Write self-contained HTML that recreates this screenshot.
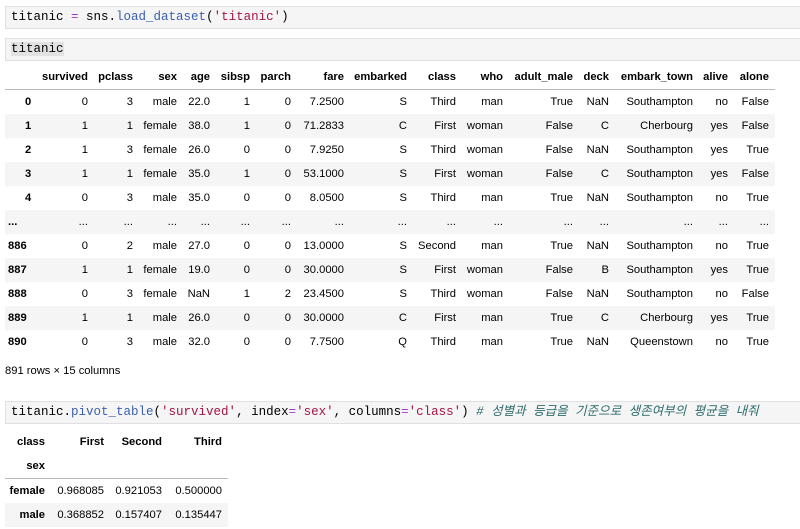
<!DOCTYPE html><html><head><meta charset="utf-8"><style>
body{margin:0;width:800px;height:529px;background:#fff;position:relative;overflow:hidden;font-family:"Liberation Sans",Arial,sans-serif;font-size:11.2px;color:#000}
.code{position:absolute;left:5px;width:800px;height:23px;background:#f5f5f5;border:1px solid #e0e0e0;box-sizing:border-box;font-family:"Liberation Mono","Noto Sans CJK KR",monospace;font-size:12.5px;line-height:21px;padding-left:5px;white-space:pre}
.k{color:#3a5fb0}.s{color:#a31545}.o{color:#a839c4}.c{color:#2d6b6b;font-style:italic}
table{position:absolute;border-collapse:collapse;table-layout:fixed}
td,th{height:24px;padding:0;text-align:right;white-space:nowrap}
th{font-weight:bold}
tr.g td,tr.g th{background:#f5f5f5}
thead tr th{border-bottom:1px solid #bbb}
</style></head><body>
<div class="code" style="top:6px">titanic <span class="o">=</span> sns.<span class="k">load_dataset</span>(<span class="s">'titanic'</span>)</div>
<div class="code" style="top:38px"><span style="background:#e2e2e2">titanic</span></div>
<table style="left:5px;top:65px;width:770px">
<colgroup><col style="width:36px"><col style="width:47px"><col style="width:45px"><col style="width:44px"><col style="width:33px"><col style="width:40px"><col style="width:41px"><col style="width:53px"><col style="width:63px"><col style="width:49px"><col style="width:47px"><col style="width:70px"><col style="width:36px"><col style="width:84px"><col style="width:35px"><col style="width:47px"></colgroup>
<thead><tr><th></th><th>survived</th><th>pclass</th><th>sex</th><th>age</th><th>sibsp</th><th>parch</th><th>fare</th><th>embarked</th><th>class</th><th>who</th><th>adult_male</th><th>deck</th><th>embark_town</th><th>alive</th><th style="padding-right:6px">alone</th></tr></thead>
<tbody>
<tr><th style="text-align:left;padding-left:20px">0</th><td>0</td><td>3</td><td>male</td><td>22.0</td><td>1</td><td>0</td><td>7.2500</td><td>S</td><td>Third</td><td>man</td><td>True</td><td>NaN</td><td>Southampton</td><td>no</td><td style="padding-right:6px">False</td></tr>
<tr class="g"><th style="text-align:left;padding-left:20px">1</th><td>1</td><td>1</td><td>female</td><td>38.0</td><td>1</td><td>0</td><td>71.2833</td><td>C</td><td>First</td><td>woman</td><td>False</td><td>C</td><td>Cherbourg</td><td>yes</td><td style="padding-right:6px">False</td></tr>
<tr><th style="text-align:left;padding-left:20px">2</th><td>1</td><td>3</td><td>female</td><td>26.0</td><td>0</td><td>0</td><td>7.9250</td><td>S</td><td>Third</td><td>woman</td><td>False</td><td>NaN</td><td>Southampton</td><td>yes</td><td style="padding-right:6px">True</td></tr>
<tr class="g"><th style="text-align:left;padding-left:20px">3</th><td>1</td><td>1</td><td>female</td><td>35.0</td><td>1</td><td>0</td><td>53.1000</td><td>S</td><td>First</td><td>woman</td><td>False</td><td>C</td><td>Southampton</td><td>yes</td><td style="padding-right:6px">False</td></tr>
<tr><th style="text-align:left;padding-left:20px">4</th><td>0</td><td>3</td><td>male</td><td>35.0</td><td>0</td><td>0</td><td>8.0500</td><td>S</td><td>Third</td><td>man</td><td>True</td><td>NaN</td><td>Southampton</td><td>no</td><td style="padding-right:6px">True</td></tr>
<tr class="g"><th style="text-align:left;padding-left:3px">...</th><td>...</td><td>...</td><td>...</td><td>...</td><td>...</td><td>...</td><td>...</td><td>...</td><td>...</td><td>...</td><td>...</td><td>...</td><td>...</td><td>...</td><td style="padding-right:6px">...</td></tr>
<tr><th style="text-align:left;padding-left:3px">886</th><td>0</td><td>2</td><td>male</td><td>27.0</td><td>0</td><td>0</td><td>13.0000</td><td>S</td><td>Second</td><td>man</td><td>True</td><td>NaN</td><td>Southampton</td><td>no</td><td style="padding-right:6px">True</td></tr>
<tr class="g"><th style="text-align:left;padding-left:3px">887</th><td>1</td><td>1</td><td>female</td><td>19.0</td><td>0</td><td>0</td><td>30.0000</td><td>S</td><td>First</td><td>woman</td><td>False</td><td>B</td><td>Southampton</td><td>yes</td><td style="padding-right:6px">True</td></tr>
<tr><th style="text-align:left;padding-left:3px">888</th><td>0</td><td>3</td><td>female</td><td>NaN</td><td>1</td><td>2</td><td>23.4500</td><td>S</td><td>Third</td><td>woman</td><td>False</td><td>NaN</td><td>Southampton</td><td>no</td><td style="padding-right:6px">False</td></tr>
<tr class="g"><th style="text-align:left;padding-left:3px">889</th><td>1</td><td>1</td><td>male</td><td>26.0</td><td>0</td><td>0</td><td>30.0000</td><td>C</td><td>First</td><td>man</td><td>True</td><td>C</td><td>Cherbourg</td><td>yes</td><td style="padding-right:6px">True</td></tr>
<tr><th style="text-align:left;padding-left:3px">890</th><td>0</td><td>3</td><td>male</td><td>32.0</td><td>0</td><td>0</td><td>7.7500</td><td>Q</td><td>Third</td><td>man</td><td>True</td><td>NaN</td><td>Queenstown</td><td>no</td><td style="padding-right:6px">True</td></tr>
</tbody></table>
<div style="position:absolute;left:5px;top:365px">891 rows × 15 columns</div>
<div class="code" style="top:401px">titanic.<span class="k">pivot_table</span>(<span class="s">'survived'</span>, index<span class="o">=</span><span class="s">'sex'</span>, columns<span class="o">=</span><span class="s">'class'</span>) <span class="c"># 성별과 등급을 기준으로 생존여부의 평균을 내줘</span></div>
<table style="left:5px;top:430px;width:223px">
<colgroup><col style="width:40px"><col style="width:59px"><col style="width:58px"><col style="width:66px"></colgroup>
<tr><th>class</th><th>First</th><th>Second</th><th style="padding-right:6px">Third</th></tr>
<tr><th style="border-bottom:1px solid #bbb">sex</th><td style="border-bottom:1px solid #bbb"></td><td style="border-bottom:1px solid #bbb"></td><td style="border-bottom:1px solid #bbb"></td></tr>
<tr><th>female</th><td>0.968085</td><td>0.921053</td><td style="padding-right:6px">0.500000</td></tr>
<tr class="g"><th>male</th><td>0.368852</td><td>0.157407</td><td style="padding-right:6px">0.135447</td></tr>
</table>
</body></html>
